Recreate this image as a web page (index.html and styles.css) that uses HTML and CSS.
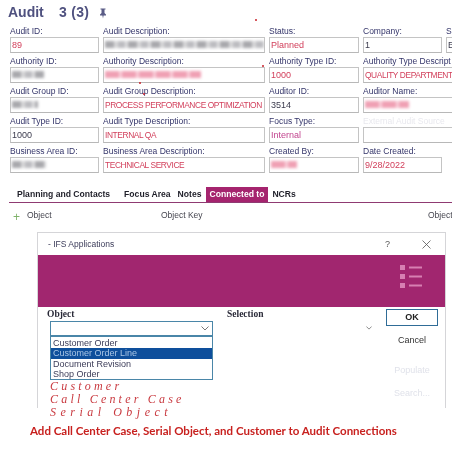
FILE: index.html
```html
<!DOCTYPE html>
<html lang="en">
<head>
<meta charset="utf-8">
<title>Audit</title>
<link rel="stylesheet" href="styles.css">
</head>
<body>
<div class="page">
  <header class="head">
    <h1 class="title">Audit</h1>
    <span class="count">3 (3)</span>
    <svg class="pin" viewBox="0 0 8 11" width="8" height="11"><path d="M1.500 0.500h5v1h-1v3.500l1.500 1.500v1h-2.400l-0.600 3-0.600-3H1v-1l1.500-1.500V1.500h-1z" fill="#5a5c86"/></svg>
  </header>
  <section class="form">
    <div class="field"><label>Audit ID:</label><div class="input red">89</div></div>
    <div class="field"><label>Audit Description:</label><div class="input"><span class="blur gray w-full"></span></div></div>
    <div class="field"><label>Status:</label><div class="input red">Planned</div></div>
    <div class="field"><label>Company:</label><div class="input dark">1</div></div>
    <div class="field"><label>S</label><div class="input dark">B</div></div>

    <div class="field"><label>Authority ID:</label><div class="input"><span class="blur gray w-id"></span></div></div>
    <div class="field"><label>Authority Description:</label><div class="input"><span class="blur pink w-desc"></span></div></div>
    <div class="field"><label>Authority Type ID:</label><div class="input red">1000</div></div>
    <div class="field span2"><label>Authority Type Descript</label><div class="input red caps">QUALITY DEPARTMENT</div></div>

    <div class="field"><label>Audit Group ID:</label><div class="input"><span class="blur gray w-short"></span></div></div>
    <div class="field"><label>Audit Group Description:</label><div class="input red caps">PROCESS PERFORMANCE OPTIMIZATION C</div></div>
    <div class="field"><label>Auditor ID:</label><div class="input dark">3514</div></div>
    <div class="field span2"><label>Auditor Name:</label><div class="input"><span class="blur pink w-name"></span></div></div>

    <div class="field"><label>Audit Type ID:</label><div class="input dark">1000</div></div>
    <div class="field"><label>Audit Type Description:</label><div class="input red caps">INTERNAL QA</div></div>
    <div class="field"><label>Focus Type:</label><div class="input magenta">Internal</div></div>
    <div class="field span2"><label class="faint">External Audit Source</label><div class="input"></div></div>

    <div class="field"><label>Business Area ID:</label><div class="input"><span class="blur gray w-id2"></span></div></div>
    <div class="field"><label>Business Area Description:</label><div class="input red caps">TECHNICAL SERVICE</div></div>
    <div class="field"><label>Created By:</label><div class="input"><span class="blur pink w-short"></span></div></div>
    <div class="field"><label>Date Created:</label><div class="input red">9/28/2022</div></div>
  </section>

  <nav class="tabs">
    <span class="tab first">Planning and Contacts</span>
    <span class="tab focus">Focus Area</span>
    <span class="tab notes">Notes</span>
    <span class="tab active">Connected to</span>
    <span class="tab">NCRs</span>
  </nav>

  <div class="columns">
    <span class="plus">+</span>
    <span class="col-object">Object</span>
    <span class="col-key">Object Key</span>
    <span class="col-end">Object</span>
  </div>

  <section class="dialog">
    <div class="dialog-title">
      <span class="dialog-name">- IFS Applications</span>
      <span class="help">?</span>
      <svg class="close" viewBox="0 0 9 9" width="9" height="9"><path d="M0.500 0.500l8 8M8.500 0.500l-8 8" stroke="#555" stroke-width="0.800" fill="none"/></svg>
    </div>
    <div class="banner">
      <svg class="banner-icon" viewBox="0 0 24 24" width="24" height="24">
        <g fill="#d77fb2">
          <rect x="0" y="1" width="5" height="5"/><rect x="0" y="10" width="5" height="5"/><rect x="0" y="19" width="5" height="5"/>
          <rect x="9" y="2.500" width="13" height="2"/><rect x="9" y="11.500" width="13" height="2"/><rect x="9" y="20.500" width="13" height="2"/>
        </g>
      </svg>
    </div>
    <div class="dialog-body">
      <div class="object-col">
        <div class="dlabel">Object</div>
        <div class="select">
          <svg class="chev" viewBox="0 0 8 5" width="8" height="5"><path d="M0.500 0.500l3.500 3.500 3.500-3.500" stroke="#777" fill="none"/></svg>
        </div>
        <ul class="options">
          <li>Customer Order</li>
          <li class="selected">Customer Order Line</li>
          <li>Document Revision</li>
          <li>Shop Order</li>
        </ul>
        <div class="hand">
          <div class="hand-a">Customer</div>
          <div class="hand-b">Call Center Case</div>
          <div class="hand-c">Serial Object</div>
        </div>
      </div>
      <div class="selection-col">
        <div class="dlabel">Selection</div>
        <svg class="chev chev-sel" viewBox="0 0 8 5" width="6" height="4"><path d="M0.500 0.500l3.500 3.500 3.500-3.500" stroke="#666" fill="none"/></svg>
      </div>
      <div class="buttons">
        <div class="btn ok">OK</div>
        <div class="btn cancel">Cancel</div>
        <div class="btn off populate">Populate</div>
        <div class="btn off search">Search...</div>
      </div>
    </div>
  </section>

  <p class="caption">Add Call Center Case, Serial Object, and Customer to Audit Connections</p>
</div>
<i class="dot d1"></i><i class="dot d2"></i><i class="dot d3"></i><i class="dot d4"></i>
</body>
</html>
```

FILE: styles.css
```css
* { box-sizing: border-box; }
html, body { margin: 0; padding: 0; background: #fff; }
body { width: 474px; height: 463px; overflow: hidden; position: relative; font-family: "Liberation Sans", Arial, sans-serif; }
.page { width: 474px; height: 463px; filter: blur(0.35px); }

.head { height: 23px; padding: 0 0 0 8px; display: flex; align-items: center; color: #4f517f; }
.title { margin: 0; font-size: 14px; font-weight: bold; width: 51px; }
.count { font-size: 14px; font-weight: bold; width: 39px; letter-spacing: 0.3px; }
.pin { margin-top: 3px; margin-left: 1px; }

.form { width: 452px; height: 156px; padding: 2px 0 0 10px; overflow: hidden; display: grid; grid-template-columns: 89px 162px 90px 79px 20px; column-gap: 4px; grid-auto-rows: 30px; }
.field { display: flex; flex-direction: column; min-width: 0; }
.span2 { grid-column: span 2; }
.field label { height: 12px; font-size: 8.500px; line-height: 12px; color: #34356a; white-space: nowrap; overflow: hidden; }
.field label.faint { color: #e8e8ee; }
.input { height: 16px; border: 1px solid #c4c4c4; border-bottom-color: #b8b8b8; background: #fff; padding: 0 0 0 1px; font-size: 9px; line-height: 14px; white-space: nowrap; overflow: hidden; }
.red { color: #d2405c; }
.caps { font-size: 8.400px; letter-spacing: -0.400px; }
.dark { color: #3b3b4d; }
.magenta { color: #c2458f; }
.blur { display: block; height: 7px; margin-top: 3px; filter: blur(1.500px); }
.gray { background: repeating-linear-gradient(90deg, #a8a8ac 0 9px, #d8d8da 9px 13px, #bcbcc0 13px 20px, #e0e0e2 20px 23px); }
.pink { background: repeating-linear-gradient(90deg, #f0a0b4 0 14px, #f9d0da 14px 17px); }
.w-full { width: 160px; }
.w-id { width: 32px; }
.w-desc { width: 96px; }
.w-short { width: 26px; }
.w-id2 { width: 34px; }
.w-name { width: 44px; }

.tabs { margin: 8px 0 0 9px; width: 443px; height: 16px; border-bottom: 1px solid #8f3a72; display: flex; align-items: stretch; font-size: 8.600px; font-weight: bold; color: #1e1e28; line-height: 14px; }
.tab { white-space: nowrap; }
.tab.first { margin-left: 8px; margin-right: 14px; }
.tab.focus { margin-right: 7px; }
.tab.notes { margin-right: 4px; }
.tab.active { background: #a5246e; color: #fff; padding: 0 4px; margin-right: 4px; }

.columns { height: 29px; position: relative; font-size: 8.500px; color: #45454f; }
.columns span { position: absolute; top: 7px; }
.columns .plus { left: 13px; top: 8px; color: #7fb26a; font-size: 12px; line-height: 12px; }
.col-object { left: 27px; }
.col-key { left: 161px; }
.col-end { left: 428px; width: 24px; overflow: hidden; }

.dialog { margin-left: 37px; width: 409px; height: 176px; border: 1px solid #d5d5d8; border-bottom: 0; background: #fff; }
.dialog-title { height: 22px; display: flex; align-items: center; padding-left: 10px; font-size: 8.500px; color: #3c3c5a; }
.dialog-name { flex: 1; }
.help { color: #555; margin-right: 32px; font-size: 9px; }
.close { margin-right: 14px; }
.banner { height: 52px; background: #a1266f; display: flex; justify-content: flex-end; padding: 9px 21px 0 0; }
.dialog-body { display: flex; height: 100px; }
.object-col { width: 188px; padding-left: 9px; }
.dlabel { font-family: "Liberation Serif", serif; font-weight: bold; font-size: 9.500px; color: #2a2a38; line-height: 14px; }
.select { margin: 0 0 0 3px; height: 15px; width: 163px; border: 1px solid #4a86a8; display: flex; align-items: center; justify-content: flex-end; padding-right: 3px; }
.options { list-style: none; margin: 0 0 0 3px; padding: 1px 0 0; width: 163px; height: 44px; border: 1px solid #4a86a8; font-size: 9px; line-height: 10.250px; color: #3c3c58; }
.options li { padding-left: 2px; height: 10.250px; white-space: nowrap; }
.options .selected { background: #0e4f9c; color: #a9c6e6; }
.hand { margin: 0 0 0 3px; color: #c93a40; font-family: "Liberation Serif", serif; font-style: italic; font-size: 12px; line-height: 13px; white-space: nowrap; }
.hand-a { letter-spacing: 3.200px; }
.hand-b { letter-spacing: 3.200px; }
.hand-c { letter-spacing: 4.500px; }
.selection-col { width: 160px; padding-left: 1px; display: flex; flex-direction: column; }
.chev-sel { margin: 5px 0 0 139px; }
.buttons { flex: 1; display: flex; flex-direction: column; align-items: center; padding: 2px 7px 0 0; font-size: 9px; }
.btn { width: 52px; text-align: center; }
.ok { height: 17px; border: 1.500px solid #2f6c97; font-weight: bold; line-height: 14px; color: #222; }
.cancel { margin-top: 7px; height: 14px; line-height: 14px; color: #333; }
.off { color: #e0e2ea; height: 14px; line-height: 14px; }
.populate { margin-top: 16px; }
.search { margin-top: 9px; }

.caption { margin: 16px 0 0 30px; font-family: Lato, "Liberation Sans", sans-serif; font-size: 11.500px; font-weight: bold; color: #c8211f; white-space: nowrap; }

.dot { position: absolute; width: 2px; height: 2px; background: #c8202a; border-radius: 50%; }
.d1 { left: 255px; top: 19px; }
.d2 { left: 262px; top: 65px; }
.d3 { left: 139px; top: 82px; }
.d4 { left: 143px; top: 93px; }
```
